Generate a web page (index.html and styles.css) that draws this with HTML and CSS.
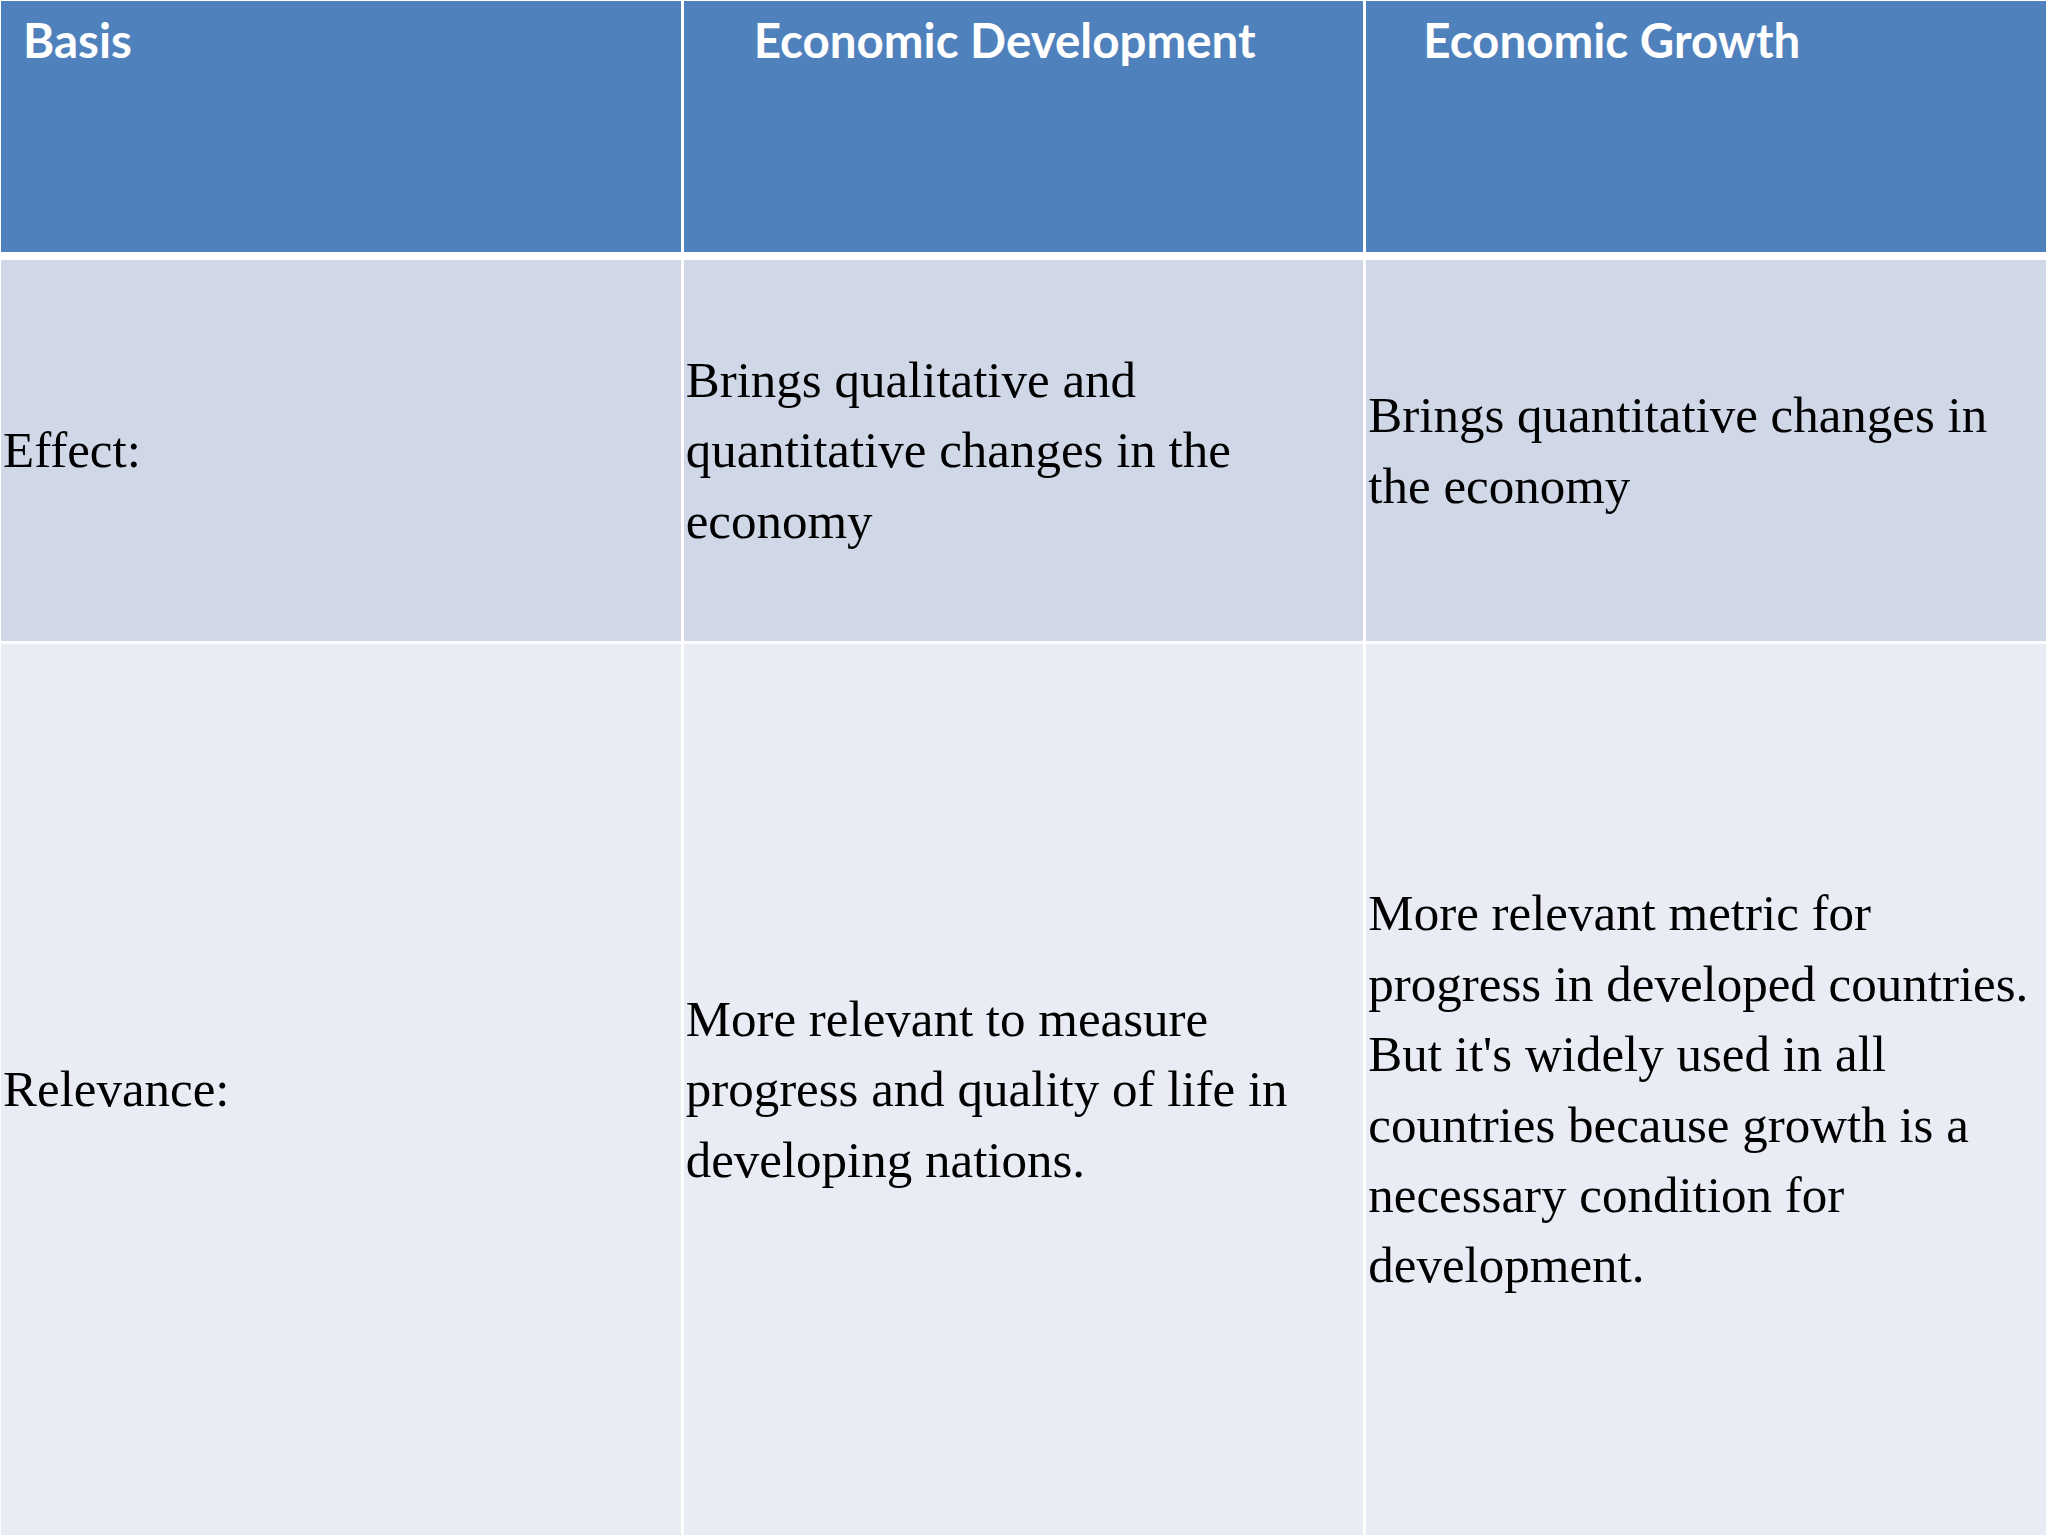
FILE: index.html
```html
<!DOCTYPE html>
<html lang="en">
<head>
<meta charset="utf-8">
<title>Economic Development vs Economic Growth</title>
<link rel="stylesheet" href="styles.css">
</head>
<body>
<div class="table">
  <div class="cell head head-basis">Basis</div>
  <div class="cell head head-dev">Economic Development</div>
  <div class="cell head head-growth">Economic Growth</div>

  <div class="cell body row-odd"><p>Effect:</p></div>
  <div class="cell body row-odd"><p>Brings qualitative and quantitative changes in the economy</p></div>
  <div class="cell body row-odd"><p>Brings quantitative changes in the economy</p></div>

  <div class="cell body row-even"><p>Relevance:</p></div>
  <div class="cell body row-even"><p>More relevant to measure progress and quality of life in developing nations.</p></div>
  <div class="cell body row-even"><p>More relevant metric for progress in developed countries. But it's widely used in all countries because growth is a necessary condition for development.</p></div>
</div>
</body>
</html>
```
FILE: styles.css
```css
html, body {
  margin: 0;
  padding: 0;
  background: #ffffff;
}

body {
  width: 2048px;
  height: 1536px;
  overflow: hidden;
}

.table {
  box-sizing: border-box;
  width: 2048px;
  height: 1536px;
  padding: 1px 2px 1px 1px;
  display: grid;
  grid-template-columns: 1fr 1fr 1fr;
  grid-template-rows: 256px 381px 1fr;
  column-gap: 3px;
  row-gap: 3px;
  background: #ffffff;
}

.cell {
  box-sizing: border-box;
  min-width: 0;
}

.head {
  background: #4f81bd;
  color: #ffffff;
  font-family: Lato, "Liberation Sans", sans-serif;
  font-weight: 700;
  font-size: 47.5px;
  line-height: 55px;
  padding-top: 11px;
  margin-bottom: 5px;
  white-space: nowrap;
}

.head-basis { padding-left: 22px; }
.head-dev { padding-left: 70px; }
.head-growth { padding-left: 57px; }

.body {
  display: flex;
  align-items: center;
  padding: 0 4px 0 2px;
  font-family: "Liberation Serif", "Times New Roman", "DejaVu Serif", serif;
  font-size: 51px;
  line-height: 70.4px;
  color: #000000;
}

.body p {
  margin: 0;
}

.row-odd { background: #d0d8e8; }
.row-even { background: #eaecf5; }
```
